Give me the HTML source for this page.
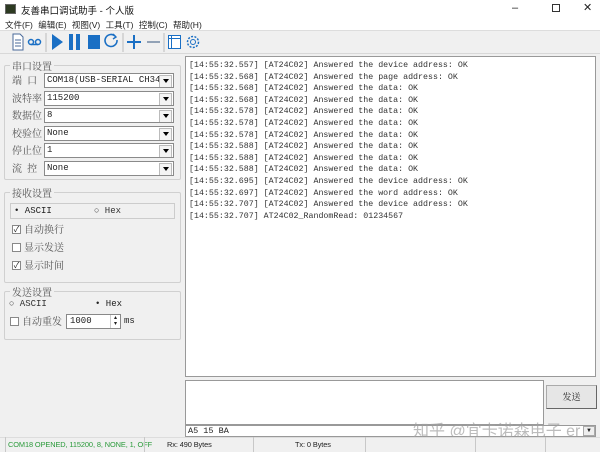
<!DOCTYPE html>
<html><head><meta charset="utf-8"><style>
*{margin:0;padding:0;box-sizing:border-box}
body{width:600px;height:452px;background:#f0f0f0;position:relative;overflow:hidden;font-family:"Liberation Sans","Noto Sans CJK SC",sans-serif;font-size:9px;color:#222}
.a{position:absolute}
.cb{position:absolute;left:44px;width:130px;height:15px;background:#fff;border:1px solid #8a8a8a;font-family:"Liberation Mono",monospace;font-size:9px;line-height:13px;padding-left:2px;overflow:hidden;white-space:nowrap}
.cb:after{content:"";position:absolute;right:1px;top:1px;width:11px;height:11px;border:1px solid #bbb;background:#f4f4f4}
.cb:before{content:"";position:absolute;right:4px;top:5px;border-left:3px solid transparent;border-right:3px solid transparent;border-top:4px solid #000;z-index:2}
.lb{position:absolute;left:12px;font-family:"Noto Serif CJK SC",serif;font-size:10px;color:#555}
.grp{position:absolute;border:1px solid #d0d0d0;border-radius:2px}
.gt{position:absolute;background:#f0f0f0;padding:0 2px;font-family:"Noto Serif CJK SC",serif;font-size:10px;color:#555}
.chk{position:absolute;width:9px;height:9px;border:1px solid #888;background:#fff;font-size:8px;line-height:7px;text-align:center}
.log{font-family:"Liberation Mono",monospace;font-size:8.3px;line-height:11.6px;color:#333;white-space:pre}
.sep{position:absolute;top:437px;width:1px;height:15px;background:#c8c8c8}
.st{position:absolute;top:440px;font-size:7.4px;letter-spacing:-0.1px}
</style></head><body>
<div class="a" style="left:0;top:0;width:600px;height:18px;background:#fff"></div>
<div class="a" style="left:5px;top:4px;width:11px;height:10px;background:#2d3a22;border:1px solid #666"></div>
<div class="a" style="left:21px;top:3px;font-size:9.5px;color:#111">友善串口调试助手 - 个人版</div>
<div class="a" style="left:512px;top:2px;font-size:11px">–</div>
<div class="a" style="left:552px;top:4px;width:8px;height:8px;border:1px solid #333"></div>
<div class="a" style="left:583px;top:1px;font-size:11px">✕</div>
<div class="a" style="left:0;top:18px;width:600px;height:12px;background:#fff"></div>
<div class="a" style="left:5px;top:19px;font-size:8.5px;word-spacing:3px">文件(F) 编辑(E) 视图(V) 工具(T) 控制(C) 帮助(H)</div>
<div class="a" style="left:0;top:30px;width:600px;height:1px;background:#ddd"></div>
<svg class="a" style="left:0;top:31px" width="210" height="22">
<path d="M13 3h7l3 3v13H13z" fill="#fff" stroke="#4a6a9a"/><path d="M15 9h6M15 12h6M15 15h6" stroke="#4a6a9a"/>
<circle cx="31" cy="11" r="2.5" fill="none" stroke="#1a6fc4" stroke-width="1.5"/><circle cx="38" cy="11" r="2.5" fill="none" stroke="#1a6fc4" stroke-width="1.5"/><path d="M31 13.5h7" stroke="#1a6fc4" stroke-width="1.5"/>
<path d="M46 2v19M123 2v19M164 2v19" stroke="#bbb"/>
<path d="M52 3l11 8-11 8z" fill="#1a6fc4"/>
<rect x="69" y="3" width="4" height="16" fill="#1a6fc4"/><rect x="76" y="3" width="4" height="16" fill="#1a6fc4"/>
<rect x="88" y="4" width="12" height="14" fill="#1a6fc4"/>
<path d="M117 9a6 6 0 1 1-2-4" fill="none" stroke="#1a6fc4" stroke-width="1.6"/><path d="M113 3l3 3-3 2" fill="none" stroke="#1a6fc4" stroke-width="1.4"/>
<path d="M127 11h14M134 4v14" stroke="#1a6fc4" stroke-width="2"/>
<path d="M147 11h13" stroke="#7a8ea8" stroke-width="1.6"/>
<rect x="168.5" y="4.5" width="12" height="13" fill="#fff" stroke="#1a6fc4"/><path d="M168.5 7.5h12M171.5 4.5v13" stroke="#1a6fc4"/>
<circle cx="193" cy="11" r="5.5" fill="none" stroke="#1a6fc4" stroke-width="1.5" stroke-dasharray="2 1.4"/><circle cx="193" cy="11" r="2.5" fill="none" stroke="#1a6fc4"/>
</svg>
<div class="a" style="left:0;top:53px;width:600px;height:1px;background:#d8d8d8"></div>

<div class="grp" style="left:4px;top:65px;width:177px;height:115px"></div>
<div class="gt" style="left:10px;top:58px">串口设置</div>
<div class="lb" style="top:72px">端&nbsp;&nbsp;口</div><div class="cb" style="top:73px">COM18(USB-SERIAL CH340)</div>
<div class="lb" style="top:90px">波特率</div><div class="cb" style="top:91px">115200</div>
<div class="lb" style="top:107px">数据位</div><div class="cb" style="top:108px">8</div>
<div class="lb" style="top:125px">校验位</div><div class="cb" style="top:126px">None</div>
<div class="lb" style="top:142px">停止位</div><div class="cb" style="top:143px">1</div>
<div class="lb" style="top:160px">流&nbsp;&nbsp;控</div><div class="cb" style="top:161px">None</div>

<div class="grp" style="left:4px;top:192px;width:177px;height:91px"></div>
<div class="gt" style="left:10px;top:185px">接收设置</div>
<div class="a" style="left:10px;top:203px;width:165px;height:16px;border:1px solid #ccc"></div>
<div class="a" style="left:14px;top:206px;font-family:'Liberation Mono',monospace;font-size:9px">• ASCII</div>
<div class="a" style="left:94px;top:206px;font-family:'Liberation Mono',monospace;font-size:9px;color:#333">○ Hex</div>
<div class="chk" style="left:12px;top:225px">✓</div><div class="lb" style="left:24px;top:221px">自动换行</div>
<div class="chk" style="left:12px;top:243px"></div><div class="lb" style="left:24px;top:239px">显示发送</div>
<div class="chk" style="left:12px;top:261px">✓</div><div class="lb" style="left:24px;top:257px">显示时间</div>

<div class="grp" style="left:4px;top:291px;width:177px;height:49px"></div>
<div class="gt" style="left:10px;top:284px">发送设置</div>
<div class="a" style="left:9px;top:299px;font-family:'Liberation Mono',monospace;font-size:9px;color:#333">○ ASCII</div>
<div class="a" style="left:95px;top:299px;font-family:'Liberation Mono',monospace;font-size:9px">• Hex</div>
<div class="chk" style="left:10px;top:317px"></div><div class="lb" style="left:22px;top:313px">自动重发</div>
<div class="a" style="left:66px;top:314px;width:55px;height:15px;background:#fff;border:1px solid #888;font-family:'Liberation Mono',monospace;font-size:9px;line-height:13px;padding-left:3px">1000</div>
<div class="a" style="left:110px;top:315px;width:10px;height:13px;border-left:1px solid #ccc;font-size:6px;line-height:6px;text-align:center">▴<br>▾</div>
<div class="a" style="left:124px;top:316px;font-family:'Liberation Mono',monospace;font-size:9px">ms</div>

<div class="a log" style="left:185px;top:56px;width:411px;height:321px;background:#fff;border:1px solid #999;padding:3px 0 0 3px">[14:55:32.557] [AT24C02] Answered the device address: OK
[14:55:32.568] [AT24C02] Answered the page address: OK
[14:55:32.568] [AT24C02] Answered the data: OK
[14:55:32.568] [AT24C02] Answered the data: OK
[14:55:32.578] [AT24C02] Answered the data: OK
[14:55:32.578] [AT24C02] Answered the data: OK
[14:55:32.578] [AT24C02] Answered the data: OK
[14:55:32.588] [AT24C02] Answered the data: OK
[14:55:32.588] [AT24C02] Answered the data: OK
[14:55:32.588] [AT24C02] Answered the data: OK
[14:55:32.695] [AT24C02] Answered the device address: OK
[14:55:32.697] [AT24C02] Answered the word address: OK
[14:55:32.707] [AT24C02] Answered the device address: OK
[14:55:32.707] AT24C02_RandomRead: 01234567</div>
<div class="a" style="left:185px;top:380px;width:359px;height:45px;background:#fff;border:1px solid #999"></div>
<div class="a" style="left:546px;top:385px;width:51px;height:24px;background:#e6e6e6;border:1px solid #aaa;border-right-color:#666;border-bottom-color:#666;text-align:center;line-height:22px;font-family:'Noto Serif CJK SC',serif;font-size:9px">发送</div>
<div class="a" style="left:185px;top:425px;width:411px;height:12px;background:#fff;border:1px solid #999;font-family:'Liberation Mono',monospace;font-size:8.5px;line-height:10px;padding-left:2px">A5 15 BA</div>
<div class="a" style="left:583px;top:426px;width:12px;height:10px;background:#eee;border:1px solid #aaa;font-size:6px;text-align:center;line-height:9px">▼</div>
<div class="a" style="left:413px;top:417px;font-size:16px;color:rgba(160,160,160,.7)">知乎 @宜卡诺森电子 er</div>

<div class="a" style="left:0;top:437px;width:600px;height:15px;background:#f0f0f0;border-top:1px solid #ddd"></div>
<div class="st" style="left:8px;color:#2a9a3a">COM18 OPENED, 115200, 8, NONE, 1, OFF</div>
<div class="st" style="left:167px">Rx: 490 Bytes</div>
<div class="st" style="left:295px">Tx: 0 Bytes</div>
<div class="sep" style="left:5px"></div><div class="sep" style="left:144px"></div><div class="sep" style="left:253px"></div><div class="sep" style="left:365px"></div><div class="sep" style="left:475px"></div><div class="sep" style="left:545px"></div>
</body></html>
